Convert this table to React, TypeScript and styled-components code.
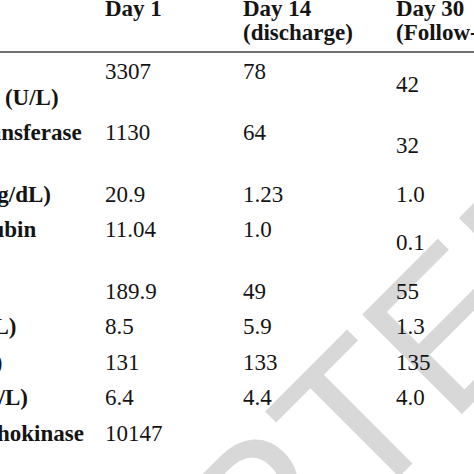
import styled, { createGlobalStyle } from "styled-components";

const GlobalStyle = createGlobalStyle`
    html, body {
        margin: 0;
        padding: 0;
        background-color: #fff;
        overflow: hidden;
    }
`;

const Page = styled.div`
    position: relative;
    width: 474px;
    height: 474px;
    overflow: hidden;
    background-color: #fff;
`;

// 원고 워터마크 (텍스트 뒤에 깔림)
const Watermark = styled.span`
    position: absolute;
    left: -261px;
    top: 891px;
    transform: rotate(-45deg);
    transform-origin: 0 0;
    font-family: "Liberation Sans", Arial, sans-serif;
    font-size: 205px;
    line-height: 1;
    color: #d8d8d8;
    white-space: nowrap;
    z-index: 0;
    user-select: none;
`;

const Table = styled.table`
    position: relative;
    z-index: 1;
    width: 748px;
    margin: -3px 0 0 -172px;
    border-collapse: collapse;
    table-layout: fixed;
    font-family: "Liberation Serif", "Times New Roman", serif;
    font-size: 23px;
    color: #141414;
`;

const Col = styled.col<{ $w: number }>`
    width: ${(props) => props.$w}px;
`;

const HeadCell = styled.th`
    padding: 0 0 6px;
    text-align: left;
    vertical-align: top;
    font-weight: 700;
    line-height: 24px;
    white-space: nowrap;
    border-bottom: 2px solid #707070;
`;

const LabelCell = styled.th`
    padding: 5.5px 0 4px;
    text-align: left;
    vertical-align: top;
    font-weight: 700;
    line-height: 26px;
    white-space: nowrap;
`;

const ValueCell = styled.td<{ $middle?: boolean }>`
    padding: 5.5px 0 4px;
    text-align: left;
    vertical-align: ${(props) => (props.$middle ? "middle" : "top")};
    font-weight: 400;
    line-height: 26px;
    white-space: nowrap;
`;

interface IRow {
    label: string[];
    day1: string;
    day14: string;
    day30: string;
}

const rows: IRow[] = [
    { label: ["Aspartate", "aminotransferase (U/L)"], day1: "3307", day14: "78", day30: "42" },
    { label: ["Alanine aminotransferase", "(U/L)"], day1: "1130", day14: "64", day30: "32" },
    { label: ["Sr. Creatinine (mg/dL)"], day1: "20.9", day14: "1.23", day30: "1.0" },
    { label: ["Serum total bilirubin", "(mg/dL)"], day1: "11.04", day14: "1.0", day30: "0.1" },
    { label: ["Urea (mg/dL)"], day1: "189.9", day14: "49", day30: "55" },
    { label: ["Phosphate (mg/dL)"], day1: "8.5", day14: "5.9", day30: "1.3" },
    { label: ["Sodium (mmol/L)"], day1: "131", day14: "133", day30: "135" },
    { label: ["Potassium (mmol/L)"], day1: "6.4", day14: "4.4", day30: "4.0" },
    { label: ["Creatinine phosphokinase"], day1: "10147", day14: "", day30: "" },
];

function App() {
    return (
        <Page>
            <GlobalStyle />
            <Watermark>ACCEPTED MANUSCRIPT</Watermark>
            <Table>
                <colgroup>
                    <Col $w={277} />
                    <Col $w={138} />
                    <Col $w={153} />
                    <Col $w={180} />
                </colgroup>
                <thead>
                    <tr>
                        <HeadCell>Parameters</HeadCell>
                        <HeadCell>Day 1</HeadCell>
                        <HeadCell>
                            Day 14
                            <br />
                            (discharge)
                        </HeadCell>
                        <HeadCell>
                            Day 30
                            <br />
                            (Follow-up)
                        </HeadCell>
                    </tr>
                </thead>
                <tbody>
                    {rows.map((row, i) => (
                        <tr key={i}>
                            <LabelCell>
                                {row.label.map((line, j) => (
                                    <span key={j}>
                                        {j > 0 && <br />}
                                        {line}
                                    </span>
                                ))}
                            </LabelCell>
                            <ValueCell>{row.day1}</ValueCell>
                            <ValueCell>{row.day14}</ValueCell>
                            <ValueCell $middle>{row.day30}</ValueCell>
                        </tr>
                    ))}
                </tbody>
            </Table>
        </Page>
    );
}

export default App;
